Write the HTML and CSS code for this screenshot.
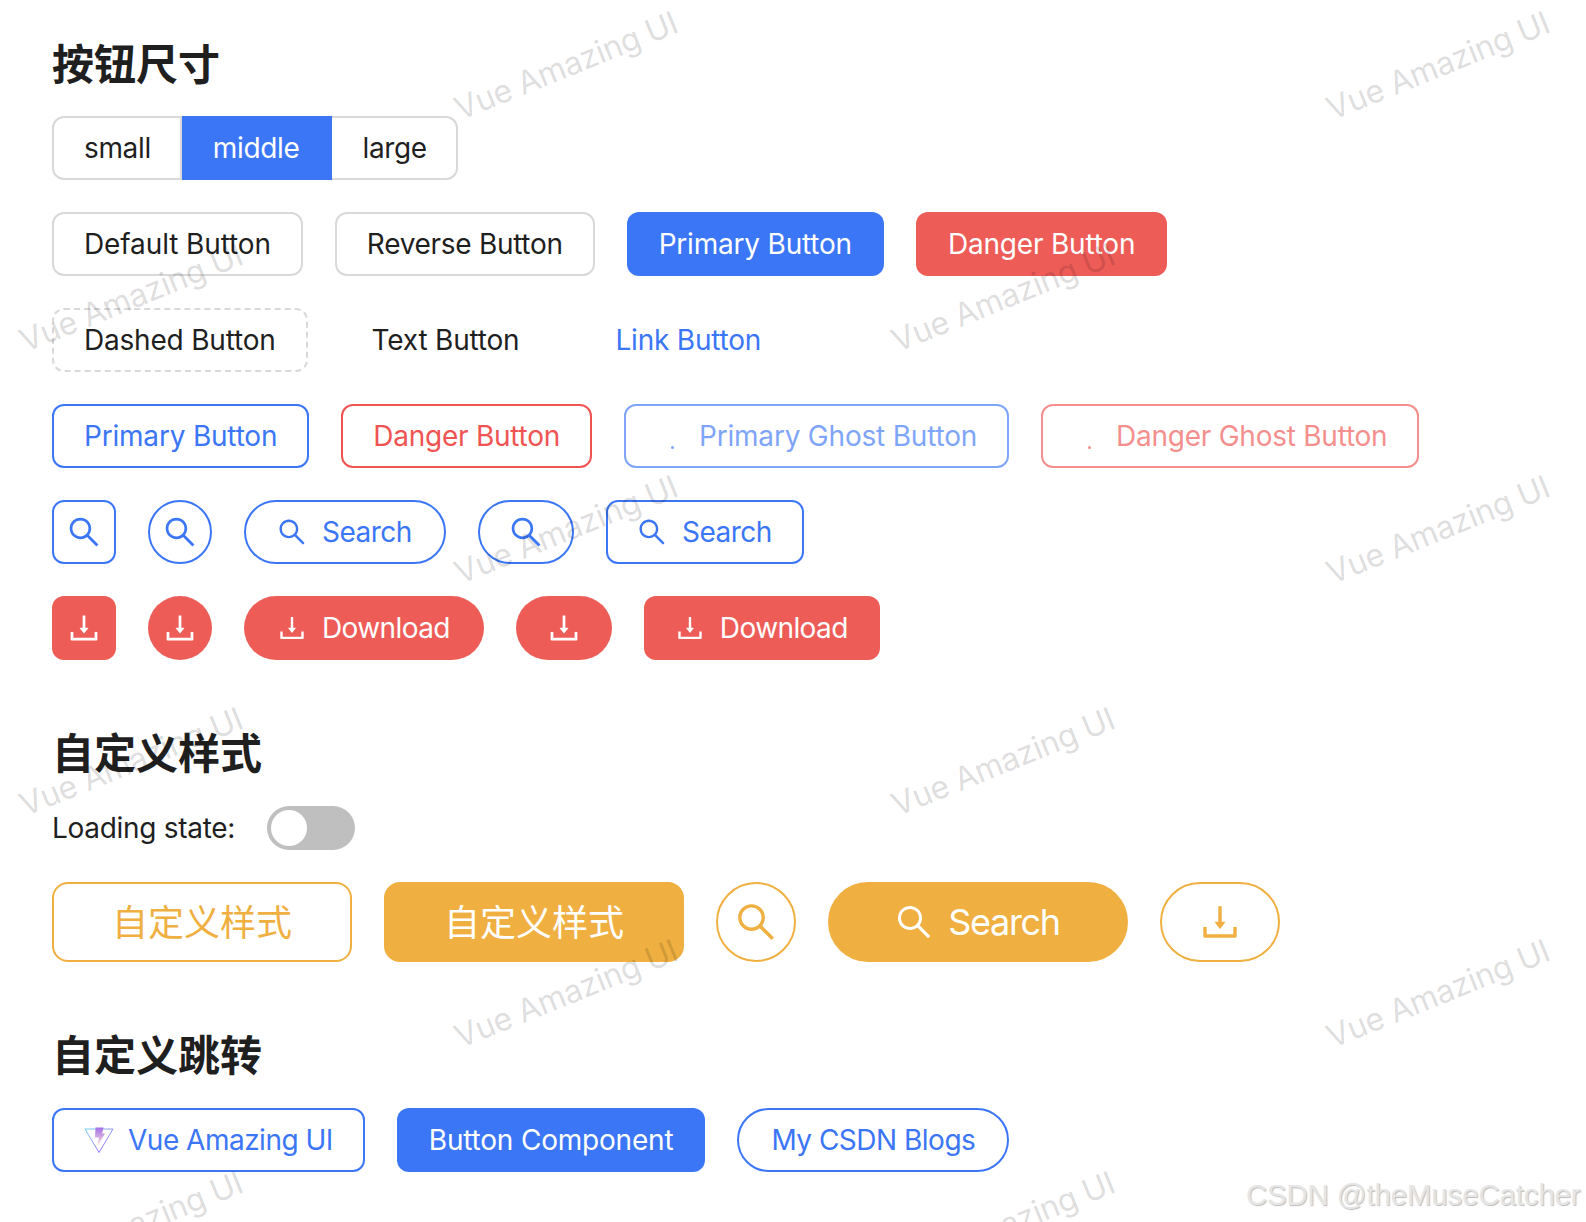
FILE: index.html
```html
<!DOCTYPE html>
<html lang="en">
<head>
    <meta charset="UTF-8">
    <meta name="viewport" content="width=device-width, initial-scale=1.0">
    <title>Button</title>
    <link rel="stylesheet" href="styles.css">
</head>
<body>
    <svg class="sprite" aria-hidden="true">
        <symbol id="icon-search" viewBox="64 64 896 896">
            <path d="M909.6 854.5L649.9 594.8C690.2 542.7 712 479 712 412c0-80.2-31.3-155.4-87.9-212.1-56.6-56.7-132-87.9-212.1-87.9s-155.5 31.3-212.1 87.9C143.2 256.5 112 331.8 112 412c0 80.1 31.3 155.5 87.9 212.1C256.5 680.8 331.8 712 412 712c67 0 130.6-21.8 182.7-62l259.7 259.6a8.2 8.2 0 0 0 11.6 0l43.6-43.5a8.2 8.2 0 0 0 0-11.6zM570.4 570.4C528 612.7 471.8 636 412 636s-116-23.3-158.4-65.6C211.3 528 188 471.8 188 412s23.3-116.1 65.6-158.4C296 211.3 352.2 188 412 188s116.1 23.2 158.4 65.6S636 352.2 636 412s-23.3 116.1-65.6 158.4z"/>
        </symbol>
        <symbol id="icon-download" viewBox="64 64 896 896">
            <path d="M505.7 661a8 8 0 0 0 12.6 0l112-141.7c4.1-5.2.4-12.9-6.3-12.9h-74.1V168c0-4.4-3.6-8-8-8h-60c-4.4 0-8 3.6-8 8v338.3H400c-6.7 0-10.4 7.7-6.3 12.9l112 141.8zM878 626h-60c-4.4 0-8 3.6-8 8v154H214V634c0-4.4-3.6-8-8-8h-60c-4.4 0-8 3.6-8 8v198c0 17.7 14.3 32 32 32h684c17.7 0 32-14.3 32-32V634c0-4.4-3.6-8-8-8z"/>
        </symbol>
    </svg>

    <h2 class="section-title first">按钮尺寸</h2>
    <div class="radio-group">
        <span class="radio-item">small</span>
        <span class="radio-item active">middle</span>
        <span class="radio-item">large</span>
    </div>

    <div class="btn-row">
        <a class="btn btn-default loose">Default Button</a>
        <a class="btn btn-default snug">Reverse Button</a>
        <a class="btn btn-primary">Primary Button</a>
        <a class="btn btn-danger">Danger Button</a>
    </div>
    <div class="btn-row">
        <a class="btn btn-dashed">Dashed Button</a>
        <a class="btn btn-text">Text Button</a>
        <a class="btn btn-link">Link Button</a>
    </div>
    <div class="btn-row">
        <a class="btn btn-outline">Primary Button</a>
        <a class="btn btn-outline-danger">Danger Button</a>
        <a class="btn btn-outline ghost"><span class="loading-dot"></span>Primary Ghost Button</a>
        <a class="btn btn-outline-danger ghost"><span class="loading-dot"></span>Danger Ghost Button</a>
    </div>
    <div class="btn-row">
        <a class="btn btn-outline icon-only"><svg class="icon-32"><use href="#icon-search"/></svg></a>
        <a class="btn btn-outline icon-only circle"><svg class="icon-32"><use href="#icon-search"/></svg></a>
        <a class="btn btn-outline round has-text tight"><svg class="icon-28"><use href="#icon-search"/></svg>Search</a>
        <a class="btn btn-outline round"><svg class="icon-32"><use href="#icon-search"/></svg></a>
        <a class="btn btn-outline tight"><svg class="icon-28"><use href="#icon-search"/></svg>Search</a>
    </div>
    <div class="btn-row">
        <a class="btn btn-danger icon-only"><svg class="icon-32"><use href="#icon-download"/></svg></a>
        <a class="btn btn-danger icon-only circle"><svg class="icon-32"><use href="#icon-download"/></svg></a>
        <a class="btn btn-danger round has-text tighter"><svg class="icon-28"><use href="#icon-download"/></svg>Download</a>
        <a class="btn btn-danger round"><svg class="icon-32"><use href="#icon-download"/></svg></a>
        <a class="btn btn-danger tighter"><svg class="icon-28"><use href="#icon-download"/></svg>Download</a>
    </div>

    <h2 class="section-title">自定义样式</h2>
    <div class="switch-row">
        <span class="switch-label">Loading state:</span>
        <span class="switch"><span class="switch-knob"></span></span>
    </div>
    <div class="btn-row custom-row">
        <a class="btn-custom cjk">自定义样式</a>
        <a class="btn-custom solid cjk">自定义样式</a>
        <a class="btn-custom circle"><svg class="icon-40"><use href="#icon-search"/></svg></a>
        <a class="btn-custom solid round search-wide"><svg class="icon-36"><use href="#icon-search"/></svg>Search</a>
        <a class="btn-custom round icon-wide"><svg class="icon-40"><use href="#icon-download"/></svg></a>
    </div>

    <h2 class="section-title">自定义跳转</h2>
    <div class="btn-row">
        <a class="btn btn-outline tight">
            <svg class="vite-logo" viewBox="0 0 30 27">
                <defs>
                    <linearGradient id="vite-line" x1="0" y1="0" x2="1" y2="1">
                        <stop offset="0" stop-color="#6fd3f7"/>
                        <stop offset="1" stop-color="#a855f7"/>
                    </linearGradient>
                    <linearGradient id="vite-bolt" x1="0" y1="0" x2="0" y2="1">
                        <stop offset="0" stop-color="#a46ee8"/>
                        <stop offset="1" stop-color="#fbe3d8"/>
                    </linearGradient>
                </defs>
                <path d="M1 2L29 2L15 25.5Z" fill="none" stroke="url(#vite-line)" stroke-width="1" stroke-linejoin="round"/>
                <path d="M11.5 0.5L19.5 0.5L18.2 6.5L21 6.5L13.5 19L15 10.5L11 10.5Z" fill="url(#vite-bolt)"/>
            </svg>
            Vue Amazing UI
        </a>
        <a class="btn btn-primary">Button Component</a>
        <a class="btn btn-outline round has-text tight">My CSDN Blogs</a>
    </div>

    <div class="watermark">
        <div class="wm-row"><span>Vue Amazing UI</span><span>Vue Amazing UI</span></div>
        <div class="wm-row shifted"><span>Vue Amazing UI</span><span>Vue Amazing UI</span></div>
        <div class="wm-row"><span>Vue Amazing UI</span><span>Vue Amazing UI</span></div>
        <div class="wm-row shifted"><span>Vue Amazing UI</span><span>Vue Amazing UI</span></div>
        <div class="wm-row"><span>Vue Amazing UI</span><span>Vue Amazing UI</span></div>
        <div class="wm-row shifted"><span>Vue Amazing UI</span><span>Vue Amazing UI</span></div>
    </div>
    <div class="csdn-mark">CSDN @theMuseCatcher</div>
</body>
</html>
```

FILE: styles.css
```css
html, body {
    height: 100%;
}
body {
    position: relative;
    box-sizing: border-box;
    height: 1222px;
    margin: 0;
    padding: 0 0 0 52px;
    overflow: hidden;
    background-color: #ffffff;
    color: #1f1f1f;
    font-family: Inter, "Noto Sans CJK SC", sans-serif;
    font-size: 28px;
    letter-spacing: -0.2px;
}
.sprite {
    display: none;
}
.section-title {
    height: 52px;
    margin: 68px 0 26px;
    font-size: 42px;
    font-weight: 700;
    line-height: 52px;
    letter-spacing: 0;
    color: #1f1f1f;
}
.section-title.first {
    margin: 39px 0 25px;
}

/* radio group */
.radio-group {
    display: flex;
    height: 64px;
    letter-spacing: -0.35px;
}
.radio-item {
    box-sizing: border-box;
    height: 64px;
    padding: 0 29px 0 30px;
    border: 2px solid #d9d9d9;
    border-left-width: 0;
    line-height: 60px;
}
.radio-item:first-child {
    border-left-width: 2px;
    border-radius: 12px 0 0 12px;
}
.radio-item:last-child {
    border-radius: 0 12px 12px 0;
}
.radio-item.active {
    padding: 0 31px;
    border-color: #3b76f6;
    background-color: #3b76f6;
    color: #ffffff;
}

/* buttons */
.btn-row {
    display: flex;
    gap: 32px;
    margin-top: 32px;
}
.section-title + .btn-row {
    margin-top: 26px;
}
.btn {
    display: inline-flex;
    align-items: center;
    box-sizing: border-box;
    height: 64px;
    padding: 0 30px;
    border: 2px solid transparent;
    border-radius: 12px;
    white-space: nowrap;
}
.btn svg {
    fill: currentColor;
}
.loose {
    letter-spacing: -0.12px;
}
.snug {
    letter-spacing: -0.3px;
}
.tight {
    letter-spacing: -0.5px;
}
.tighter {
    letter-spacing: -0.6px;
}
.btn-default {
    border-color: #d9d9d9;
}
.btn-dashed {
    border: 2px dashed #d9d9d9;
}
.btn-primary {
    background-color: #3b76f6;
    color: #ffffff;
}
.btn-danger {
    background-color: #ee5c58;
    color: #ffffff;
}
.btn-link {
    color: #3b76f6;
}
.btn-outline {
    border-color: #3b76f6;
    color: #3b76f6;
}
.btn-outline-danger {
    border-color: #ef5452;
    color: #ef5452;
    letter-spacing: -0.25px;
}
.btn.ghost {
    opacity: 0.65;
}
.loading-dot {
    display: block;
    flex: none;
    width: 3px;
    height: 3px;
    margin: 22px 25px 0 15px;
    border-radius: 50%;
    background-color: currentColor;
}
.icon-only {
    justify-content: center;
    width: 64px;
    padding: 0;
}
.circle {
    border-radius: 50%;
}
.round {
    border-radius: 32px;
}
.round.has-text {
    padding: 0 32px;
}
.icon-28 {
    width: 28px;
    height: 28px;
    margin-right: 16px;
}
.icon-32 {
    width: 32px;
    height: 32px;
}
.icon-36 {
    width: 36px;
    height: 36px;
    margin-right: 16px;
}
.icon-40 {
    width: 40px;
    height: 40px;
}
.vite-logo {
    width: 30px;
    height: 27px;
    margin-right: 14px;
}

/* switch */
.switch-row {
    display: flex;
    align-items: center;
    gap: 32px;
    height: 44px;
}
.switch-label {
    letter-spacing: -0.3px;
}
.switch {
    display: block;
    width: 88px;
    height: 44px;
    border-radius: 22px;
    background-color: #bfbfbf;
}
.switch-knob {
    display: block;
    width: 36px;
    height: 36px;
    margin: 4px;
    border-radius: 50%;
    background-color: #ffffff;
}

/* custom buttons */
.btn-custom {
    display: inline-flex;
    align-items: center;
    justify-content: center;
    box-sizing: border-box;
    height: 80px;
    padding: 0 58px;
    border: 2px solid #efb041;
    border-radius: 16px;
    color: #efb041;
    font-size: 36px;
    letter-spacing: 0;
    white-space: nowrap;
}
.btn-custom svg {
    fill: currentColor;
}
.btn-custom.cjk {
    padding-bottom: 4px;
}
.btn-custom.solid {
    background-color: #efb041;
    color: #ffffff;
}
.btn-custom.circle {
    width: 80px;
    padding: 0;
    border-radius: 50%;
}
.btn-custom.round {
    border-radius: 40px;
}
.btn-custom.search-wide {
    width: 300px;
    padding: 0;
    letter-spacing: -1.3px;
}
.btn-custom.icon-wide {
    width: 120px;
    padding: 0;
}

/* overlays */
.watermark {
    position: absolute;
    top: -51px;
    left: 130px;
    width: 1800px;
    pointer-events: none;
}
.wm-row {
    display: flex;
    align-items: center;
    height: 232px;
}
.wm-row.shifted {
    margin-left: -435px;
}
.wm-row span {
    flex: none;
    width: 872px;
    color: rgba(0, 0, 0, 0.15);
    font-size: 32px;
    letter-spacing: -0.35px;
    text-align: center;
    transform: rotate(-22deg);
}
.csdn-mark {
    position: absolute;
    top: 1176px;
    left: 1246px;
    color: #e6e6e6;
    font-family: "Liberation Sans", sans-serif;
    font-size: 29.2px;
    line-height: 38px;
    letter-spacing: 0;
    white-space: nowrap;
    text-shadow: 1px 1px 1px #bdbdbd;
}
```
